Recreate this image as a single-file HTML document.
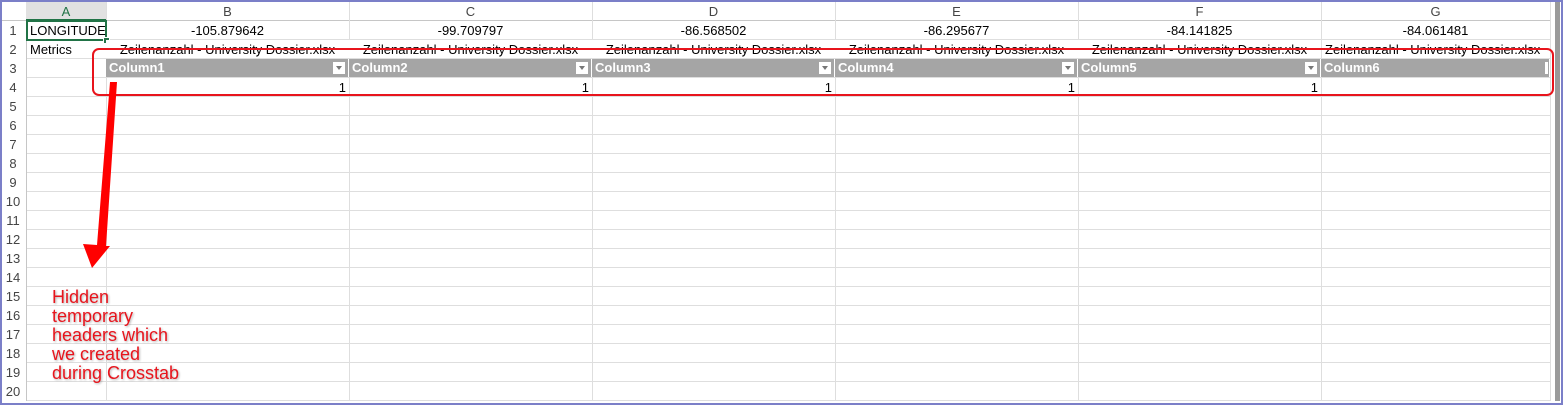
<!DOCTYPE html>
<html><head><meta charset="utf-8"><style>
body{margin:0;width:1563px;height:405px;overflow:hidden;background:#fff;font-family:"Liberation Sans",sans-serif;font-size:13px;color:#000}
#frame{position:absolute;left:0;top:0;width:1559px;height:401px;border:2px solid #7b7fc8}
.abs{position:absolute}
#grid{left:26px;top:21px;width:1525px;height:380px;background:
repeating-linear-gradient(to bottom,transparent 0,transparent 18px,#dedede 18px,#dedede 19px)}
.vl{position:absolute;top:2px;width:1px;height:398px;background:#dedede}
#colhdr{left:0;top:2px;width:1551px;height:19px;background:#fff;border-bottom:1px solid #c6c6c6;box-sizing:border-box}
.ch{position:absolute;top:2px;height:19px;line-height:19px;text-align:center;color:#444;font-size:13px}
#rowhdr{left:0;top:21px;width:26px;height:380px;background:#fff;border-right:1px solid #c6c6c6}
.rh{position:absolute;left:0;width:26px;height:19px;line-height:19px;text-align:center;color:#444;font-size:13px}
.c{position:absolute;height:19px;line-height:19px;white-space:nowrap;overflow:hidden}
.r{text-align:right;padding-right:3px;box-sizing:border-box}
.ctr{text-align:center}
.hdr{position:absolute;top:59px;height:18px;background:#a5a5a5;color:#fff;font-weight:bold;line-height:18px;padding-left:3px;box-sizing:border-box;border-right:1px solid #fff}
.dd{position:absolute;top:3px;right:3px;width:12px;height:12px;background:#fff}
.dd:after{content:"";position:absolute;left:3px;top:4px;border-left:3px solid transparent;border-right:3px solid transparent;border-top:4px solid #777}
</style></head><body>
<div class="abs" id="grid"></div>
<div class="abs" id="colhdr"></div>
<div class="abs" id="rowhdr"></div>
<div class="vl" style="left:106px"></div><div class="vl" style="left:349px"></div><div class="vl" style="left:592px"></div><div class="vl" style="left:835px"></div><div class="vl" style="left:1078px"></div><div class="vl" style="left:1321px"></div><div class="vl" style="left:1550px"></div>
<div class="abs" style="left:26px;top:2px;width:80px;height:19px;background:#e1e1e1;border-bottom:2px solid #217346;box-sizing:border-box"></div>
<div class="ch" style="left:26px;width:80px;color:#217346">A</div>
<div class="ch" style="left:106px;width:243px">B</div>
<div class="ch" style="left:349px;width:243px">C</div>
<div class="ch" style="left:592px;width:243px">D</div>
<div class="ch" style="left:835px;width:243px">E</div>
<div class="ch" style="left:1078px;width:243px">F</div>
<div class="ch" style="left:1321px;width:229px">G</div>
<div class="rh" style="top:21px">1</div><div class="rh" style="top:40px">2</div><div class="rh" style="top:59px">3</div><div class="rh" style="top:78px">4</div><div class="rh" style="top:97px">5</div><div class="rh" style="top:116px">6</div><div class="rh" style="top:135px">7</div><div class="rh" style="top:154px">8</div><div class="rh" style="top:173px">9</div><div class="rh" style="top:192px">10</div><div class="rh" style="top:211px">11</div><div class="rh" style="top:230px">12</div><div class="rh" style="top:249px">13</div><div class="rh" style="top:268px">14</div><div class="rh" style="top:287px">15</div><div class="rh" style="top:306px">16</div><div class="rh" style="top:325px">17</div><div class="rh" style="top:344px">18</div><div class="rh" style="top:363px">19</div><div class="rh" style="top:382px">20</div>
<div class="abs" style="left:26px;top:20px;width:81px;height:21px;border:2px solid #217346;box-sizing:border-box"></div>
<div class="abs" style="left:103px;top:37px;width:5px;height:5px;background:#217346;border:1px solid #fff"></div>
<div class="c" style="left:30px;top:21px">LONGITUDE</div>
<div class="c" style="left:30px;top:40px">Metrics</div>
<div class="c ctr" style="left:106px;top:21px;width:243px">-105.879642</div>
<div class="c ctr" style="left:349px;top:21px;width:243px">-99.709797</div>
<div class="c ctr" style="left:592px;top:21px;width:243px">-86.568502</div>
<div class="c ctr" style="left:835px;top:21px;width:243px">-86.295677</div>
<div class="c ctr" style="left:1078px;top:21px;width:243px">-84.141825</div>
<div class="c ctr" style="left:1321px;top:21px;width:229px">-84.061481</div>
<div class="c ctr" style="left:106px;top:40px;width:243px;height:18px;background:#fff">Zeilenanzahl - University Dossier.xlsx</div>
<div class="c ctr" style="left:349px;top:40px;width:243px;height:18px;background:#fff">Zeilenanzahl - University Dossier.xlsx</div>
<div class="c ctr" style="left:592px;top:40px;width:243px;height:18px;background:#fff">Zeilenanzahl - University Dossier.xlsx</div>
<div class="c ctr" style="left:835px;top:40px;width:243px;height:18px;background:#fff">Zeilenanzahl - University Dossier.xlsx</div>
<div class="c ctr" style="left:1078px;top:40px;width:243px;height:18px;background:#fff">Zeilenanzahl - University Dossier.xlsx</div>
<div class="c" style="left:1325px;top:40px;width:225px;height:18px;background:#fff">Zeilenanzahl - University Dossier.xlsx</div>
<div class="hdr" style="left:106px;width:243px">Column1<div class="dd"></div></div>
<div class="hdr" style="left:349px;width:243px">Column2<div class="dd"></div></div>
<div class="hdr" style="left:592px;width:243px">Column3<div class="dd"></div></div>
<div class="hdr" style="left:835px;width:243px">Column4<div class="dd"></div></div>
<div class="hdr" style="left:1078px;width:243px">Column5<div class="dd"></div></div>
<div class="hdr" style="left:1321px;width:228px;border:none">Column6<div class="abs" style="right:1px;top:3px;width:3px;height:12px;background:#fff"></div></div>
<div class="c r" style="left:106px;top:78px;width:243px">1</div>
<div class="c r" style="left:349px;top:78px;width:243px">1</div>
<div class="c r" style="left:592px;top:78px;width:243px">1</div>
<div class="c r" style="left:835px;top:78px;width:243px">1</div>
<div class="c r" style="left:1078px;top:78px;width:243px">1</div>
<div class="abs" style="left:1555px;top:2px;width:5px;height:399px;background:#9a9a9a"></div>
<div class="abs" id="frame"></div>
<svg class="abs" style="left:0;top:0" width="1563" height="405">
<rect x="93" y="49" width="1460" height="46" rx="6" fill="none" stroke="#e8141c" stroke-width="2"/>
<polygon points="110,82 117,82 106,246 110,246 92,268 83,244 97,245" fill="#f00"/>
<g fill="#e8141c" font-family="Liberation Sans" font-size="18" style="text-shadow:1px 1px 2px rgba(0,0,0,0.3)">
<text x="52" y="303">Hidden</text>
<text x="52" y="322">temporary</text>
<text x="52" y="341">headers which</text>
<text x="52" y="360">we created</text>
<text x="52" y="379">during Crosstab</text>
</g>
</svg>
</body></html>
